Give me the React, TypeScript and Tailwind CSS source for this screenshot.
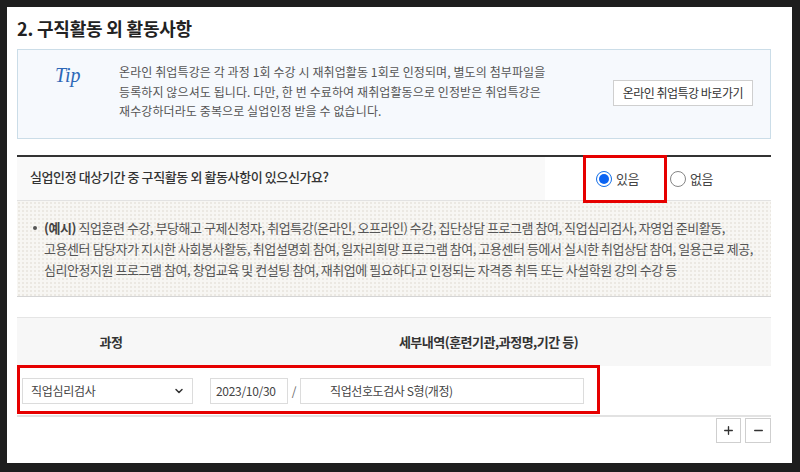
import { ChevronDown, Plus, Minus } from "lucide-react";

const font = { fontFamily: '"Noto Sans CJK KR", "Noto Sans", sans-serif' };

const tipLines = [
  "온라인 취업특강은 각 과정 1회 수강 시 재취업활동 1회로 인정되며, 별도의 첨부파일을",
  "등록하지 않으셔도 됩니다. 다만, 한 번 수료하여 재취업활동으로 인정받은 취업특강은",
  "재수강하더라도 중복으로 실업인정 받을 수 없습니다.",
];

function Radio({ checked, label }: { checked?: boolean; label: string }) {
  return (
    <label className="flex items-center gap-[4px] cursor-pointer">
      {checked ? (
        <span className="w-[16px] h-[16px] rounded-full bg-[#1a73e8] border-[1px] border-[#1a73e8] flex items-center justify-center">
          <span className="w-[10px] h-[10px] rounded-full bg-[#0a63f2] ring-2 ring-white" />
        </span>
      ) : (
        <span className="w-[16px] h-[16px] rounded-full bg-white border-[1px] border-[#858585]" />
      )}
      <span className="text-[13px] text-[#444] tracking-[-0.5px]">{label}</span>
    </label>
  );
}

export default function App() {
  return (
    <div className="w-[800px] h-[472px] bg-[#1e1e1e] pt-[7px] pl-[7px]" style={font}>
      <div className="w-[785px] h-[456px] bg-white pl-[10px] pr-[21px]">
        {/* title */}
        <h2 className="pt-[8px] h-[34px] text-[18px] leading-[26px] font-semibold text-[#222] tracking-[-0.2px]">
          2. 구직활동 외 활동사항
        </h2>

        {/* tip box */}
        <div className="mt-[8px] h-[90px] border border-[#cbdde8] bg-[#f6f9fd] flex items-start">
          <div
            className="w-[101px] pl-[37px] pt-[13px] text-[20px] leading-[24px] italic text-[#2d67b7]"
            style={{ fontFamily: '"Liberation Serif", serif' }}
          >
            Tip
          </div>
          <div className="flex-1 pt-[12px] text-[12px] leading-[19.5px] text-[#555] tracking-[0.1px]">
            {tipLines.map((l) => (
              <p key={l}>{l}</p>
            ))}
          </div>
          <button className="mt-[30px] mr-[17px] h-[26px] px-[9px] bg-white border border-[#cfcfcf] text-[12px] text-[#333] tracking-[-0.5px]">
            온라인 취업특강 바로가기
          </button>
        </div>

        {/* question */}
        <div className="mt-[16px] border-t-2 border-[#333]">
          <div className="flex h-[44px] border-b border-[#e2e2e2]">
            <div className="w-[528px] bg-[#f9f9f9] flex items-center pl-[13px] pb-[3px] text-[13px] font-medium text-[#333] tracking-[-0.4px]">
              실업인정 대상기간 중 구직활동 외 활동사항이 있으신가요?
            </div>
            <div className="flex-1 bg-white flex items-center pl-[51px] gap-[31px] relative">
              <Radio checked label="있음" />
              <Radio label="없음" />
              <div className="absolute left-[38px] top-[-2px] w-[84px] h-[48px] border-[3px] border-[#e60000]" />
            </div>
          </div>

          {/* example */}
          <div className="h-[96px] bg-[#f7f6f3] bg-[radial-gradient(#ebe8e2_1px,transparent_1px)] bg-[length:4px_4px] border-b border-[#d5d5d5] pl-[16px] pt-[16px] text-[13px] leading-[21px] text-[#555] tracking-[-0.45px] flex">
            <span className="w-[11px] h-[21px] flex items-center">
              <span className="w-[4px] h-[4px] rounded-full bg-[#555]" />
            </span>
            <div>
              <p>
                <b className="text-[#444]">(예시)</b> 직업훈련 수강, 부당해고 구제신청자, 취업특강(온라인, 오프라인) 수강, 집단상담 프로그램 참여, 직업심리검사, 자영업 준비활동,
              </p>
              <p>고용센터 담당자가 지시한 사회봉사활동, 취업설명회 참여, 일자리희망 프로그램 참여, 고용센터 등에서 실시한 취업상담 참여, 일용근로 제공,</p>
              <p>심리안정지원 프로그램 참여, 창업교육 및 컨설팅 참여, 재취업에 필요하다고 인정되는 자격증 취득 또는 사설학원 강의 수강 등</p>
            </div>
          </div>
        </div>

        {/* table */}
        <div className="mt-[20px] border-t border-[#e5e5e5]">
          <div className="flex h-[48px] bg-[#f7f7f7] text-[13px] font-bold text-[#333] tracking-[-0.5px]">
            <div className="w-[188px] flex items-center justify-center">과정</div>
            <div className="flex-1 flex items-center justify-center pl-[1px]">세부내역(훈련기관,과정명,기간 등)</div>
          </div>
          <div className="relative flex items-center h-[51px] border-b-2 border-[#e2e2e2] text-[12px] text-[#444]">
            <div className="w-[193px] pl-[5px] pr-[17px]">
              <div className="h-[26px] border border-[#dcdcdc] flex items-center justify-between pl-[8px] pr-[7px]">
                <span className="tracking-[-0.3px]">직업심리검사</span>
                <ChevronDown size={12} strokeWidth={3} className="text-[#333]" />
              </div>
            </div>
            <div className="flex items-center">
              <div className="w-[78px] h-[26px] border border-[#dcdcdc] flex items-center pl-[5px] tracking-[-0.3px]">
                2023/10/30
              </div>
              <span className="w-[12px] text-center text-[#666]">/</span>
              <div className="w-[284px] h-[26px] border border-[#dcdcdc] flex items-center pl-[29px] tracking-[-0.4px]">
                직업선호도검사 S형(개정)
              </div>
            </div>
            <div className="absolute left-0 top-[-1px] w-[583px] h-[49px] border-[3px] border-[#e60000]" />
          </div>
          <div className="flex justify-end gap-[4px] mt-[1px]">
            <button className="w-[25px] h-[25px] border border-[#cfcfcf] bg-white flex items-center justify-center text-[#333]">
              <Plus size={13} strokeWidth={2.5} />
            </button>
            <button className="w-[26px] h-[25px] border border-[#cfcfcf] bg-white flex items-center justify-center text-[#333]">
              <Minus size={13} strokeWidth={2.5} />
            </button>
          </div>
        </div>
      </div>
    </div>
  );
}
